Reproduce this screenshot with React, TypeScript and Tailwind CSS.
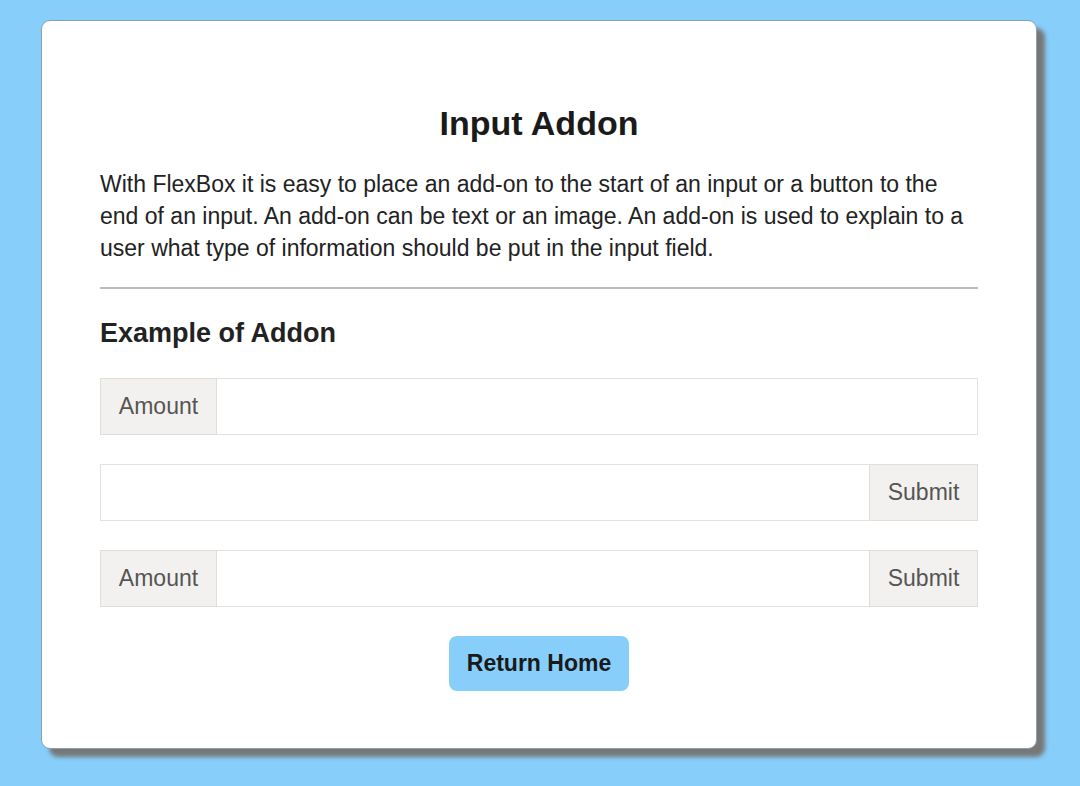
function AddonRow({ left, right }: { left?: string; right?: string }) {
  return (
    <div className="flex h-[57px] w-full">
      {left && (
        <span className="flex w-[117px] shrink-0 items-center justify-center border border-[#e3ddd8] bg-[#f3f1ef] text-[23px] text-[#555]">
          {left}
        </span>
      )}
      <input
        type="text"
        className={`min-w-0 flex-1 border border-[#e6e1dd] bg-white px-3 text-[22px] outline-none ${left ? 'border-l-0' : ''} ${right ? 'border-r-0' : ''}`}
      />
      {right && (
        <button className="flex w-[109px] shrink-0 items-center justify-center border border-[#e3ddd8] bg-[#f3f1ef] text-[23px] text-[#555]">
          {right}
        </button>
      )}
    </div>
  )
}

export default function App() {
  return (
    <div className="min-h-[786px] bg-[#87cefa] pt-[20px] pb-[38px] font-['Liberation_Sans',Arial,sans-serif] text-[#222]">
      <div className="mx-[41px] w-[996px] rounded-[9px] border border-[#8aa0b0] bg-white px-[58px] pt-[82px] pb-[57px] shadow-[8px_8px_4px_#777]">
        <h1 className="text-center text-[34px] font-bold leading-[40px] text-[#1a1a1a]">Input Addon</h1>
        <p className="mt-[25px] text-[23px] leading-[32px]">
          With FlexBox it is easy to place an add-on to the start of an input or a button to the end of an
          input. An add-on can be text or an image. An add-on is used to explain to a user what type of
          information should be put in the input field.
        </p>
        <hr className="mt-[23px] border-t-2 border-[#bbb]" />
        <h2 className="mt-[28px] text-[27px] font-bold leading-[32px]">Example of Addon</h2>
        <div className="mt-[29px] flex flex-col gap-[29px]">
          <AddonRow left="Amount" />
          <AddonRow right="Submit" />
          <AddonRow left="Amount" right="Submit" />
        </div>
        <div className="mt-[29px] flex justify-center">
          <button className="h-[55px] w-[180px] rounded-[8px] bg-[#87cefa] text-[23px] font-bold text-[#1a1a1a]">
            Return Home
          </button>
        </div>
      </div>
    </div>
  )
}
